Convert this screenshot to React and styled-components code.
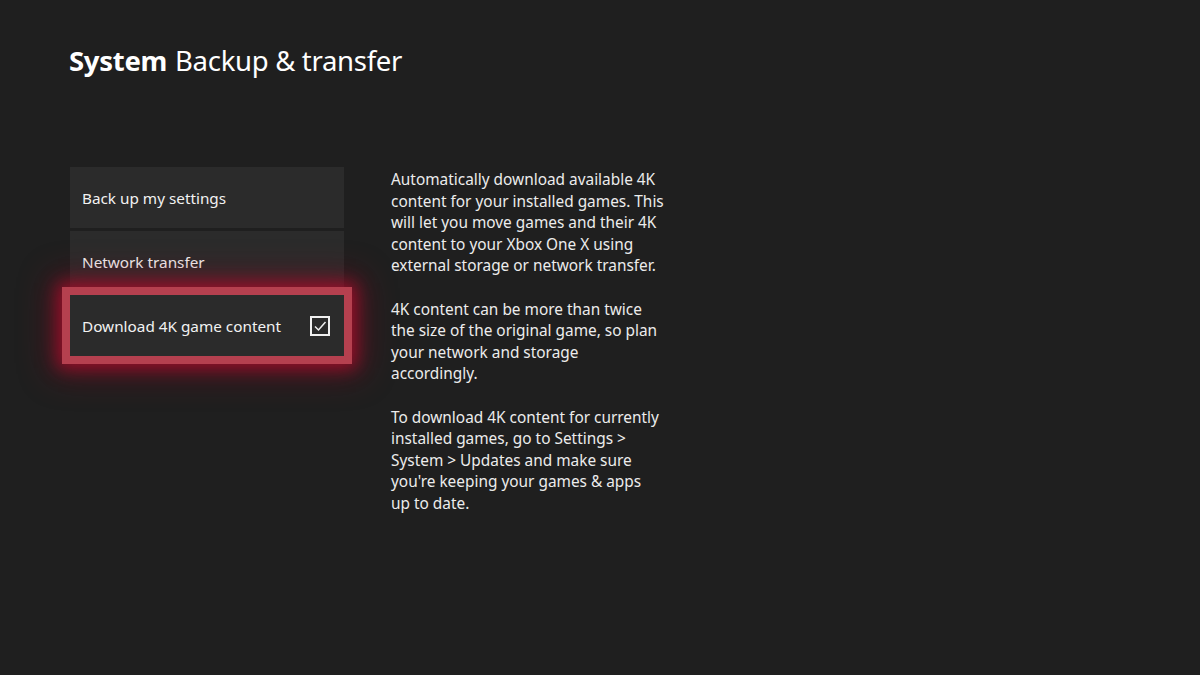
import React from 'react';
import styled, { createGlobalStyle } from 'styled-components';

const GlobalStyle = createGlobalStyle`
    html, body {
        margin: 0;
        padding: 0;
        background: #1f1f1f;
    }
    body {
        font-family: "Noto Sans", "Open Sans", "Liberation Sans", sans-serif;
        color: #ffffff;
        -webkit-font-smoothing: antialiased;
    }
`;

const Page = styled.div`
    width: 1200px;
    height: 675px;
    box-sizing: border-box;
    padding: 39px 0 0 69px;
    background: #1f1f1f;
    overflow: hidden;
`;

const Title = styled.h1`
    margin: 0;
    font-size: 27.5px;
    font-weight: 400;
    line-height: 44px;
    color: #ffffff;
    letter-spacing: -0.3px;

    b {
        font-weight: 700;
        margin-right: 8px;
    }
`;

const Main = styled.div`
    display: flex;
    align-items: flex-start;
    gap: 47px;
    margin-top: 84px;
    padding-left: 1px;
`;

const Menu = styled.div`
    width: 274px;
    display: flex;
    flex-direction: column;
    gap: 3px;
`;

const Tile = styled.div`
    height: 61px;
    box-sizing: border-box;
    padding: 0 12px;
    display: flex;
    align-items: center;
    justify-content: space-between;
    background: #2b2b2b;
    color: #f2f2f2;
    font-size: 15.3px;
    position: relative;
    z-index: ${(p) => (p.$focused ? 1 : 0)};
    box-shadow: ${(p) =>
        p.$focused
            ? '0 0 0 8px #b5404f, 0 0 16px 12px rgba(175, 12, 44, 0.8), 0 0 34px 18px rgba(150, 8, 36, 0.4)'
            : 'none'};
`;

const Check = styled.span`
    width: 20px;
    height: 20px;
    box-sizing: border-box;
    border: 2px solid #f0f0f0;
    display: flex;
    align-items: center;
    justify-content: center;
    margin-right: 2px;
`;

const Description = styled.div`
    width: 290px;
    margin-top: 2px;
    font-size: 15.4px;
    line-height: 21.6px;
    color: #ececec;

    p {
        margin: 0 0 21.6px 0;
    }
`;

const items = [
    { label: 'Back up my settings' },
    { label: 'Network transfer' },
    { label: 'Download 4K game content', focused: true, checked: true },
];

const App = () => {
    return (
        <>
            <GlobalStyle />
            <Page>
                <Title>
                    <b>System</b>Backup &amp; transfer
                </Title>
                <Main>
                    <Menu>
                        {items.map((item) => (
                            <Tile key={item.label} $focused={item.focused}>
                                <span>{item.label}</span>
                                {item.checked && (
                                    <Check>
                                        <svg width="14" height="14" viewBox="0 0 14 14">
                                            <path d="M2 7.5 L5.5 11 L12.5 3" fill="none" stroke="#f0f0f0" strokeWidth="1.5" />
                                        </svg>
                                    </Check>
                                )}
                            </Tile>
                        ))}
                    </Menu>
                    <Description>
                        <p>
                            Automatically download available 4K<br />
                            content for your installed games. This<br />
                            will let you move games and their 4K<br />
                            content to your Xbox One X using<br />
                            external storage or network transfer.
                        </p>
                        <p>
                            4K content can be more than twice<br />
                            the size of the original game, so plan<br />
                            your network and storage<br />
                            accordingly.
                        </p>
                        <p>
                            To download 4K content for currently<br />
                            installed games, go to Settings &gt;<br />
                            System &gt; Updates and make sure<br />
                            you're keeping your games &amp; apps<br />
                            up to date.
                        </p>
                    </Description>
                </Main>
            </Page>
        </>
    );
};

export default App;
